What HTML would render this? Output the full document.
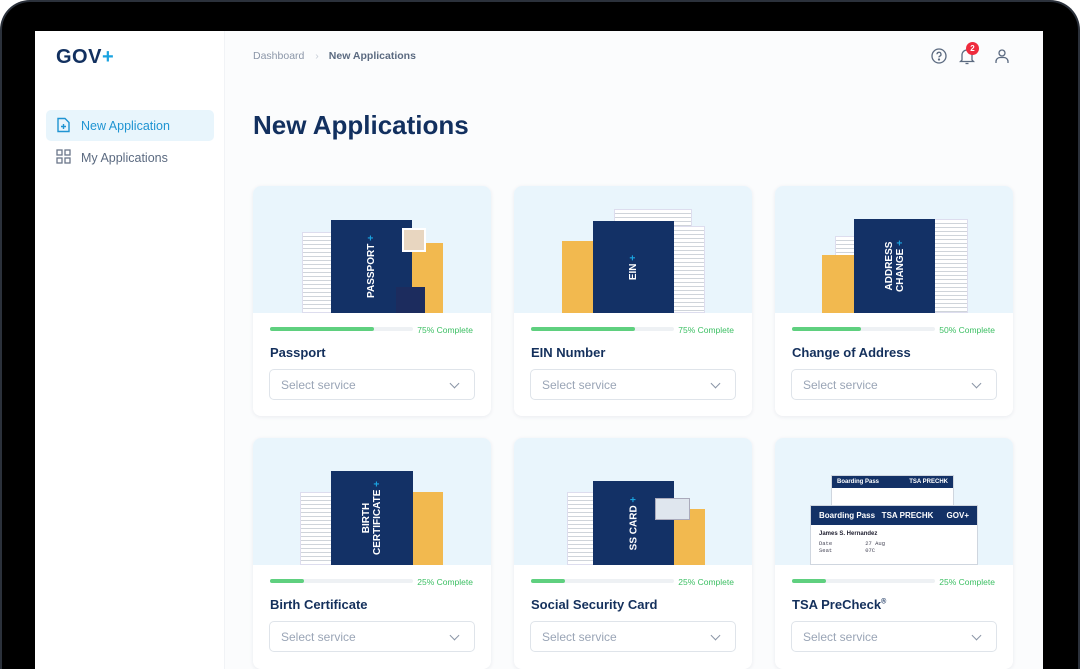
<!DOCTYPE html>
<html><head><meta charset="utf-8"><style>
*{box-sizing:border-box;margin:0;padding:0}
html,body{width:1080px;height:669px;overflow:hidden}
body{background:#fff;font-family:"Liberation Sans",sans-serif;position:relative}
.frame{position:absolute;left:0;top:0;width:1080px;height:669px;background:#000;border:2px solid #2b313b;border-bottom:none;border-radius:30px 30px 0 0}
.screen{position:absolute;left:35px;top:31px;width:1008px;height:638px;background:#fff;overflow:hidden}
.side{position:absolute;left:0;top:0;width:190px;height:100%;background:#fff;border-right:1px solid #f1f3f6}
.main{position:absolute;left:190px;top:0;right:0;height:100%;background:#fbfcfd}
.logo{position:absolute;left:21px;top:15px;font-weight:bold;font-size:20px;color:#12305f;letter-spacing:.5px}
.logo span{color:#1aa3e0}
.nav{position:absolute;left:11px;width:168px;height:31px;border-radius:5px;font-size:12.5px;display:flex;align-items:center;padding-left:35px}
.nav svg{position:absolute;left:10px;top:7px}
.crumb{position:absolute;left:28px;top:19px;font-size:10.5px;color:#8b96a8}
.crumb b{color:#5b6a80;font-weight:bold;margin-left:10px}
h1{position:absolute;left:28px;top:79px;font-size:26px;color:#12305f;font-weight:bold}
.card{position:absolute;width:238px;height:230px;background:#fff;border-radius:8px;box-shadow:0 1px 4px rgba(20,40,80,.08);overflow:hidden}
.img{position:absolute;left:0;top:0;width:100%;height:127px;background:#e9f5fc;overflow:hidden}
.bar{position:absolute;left:17px;top:141px;width:143px;height:4px;background:#eef1f4;border-radius:2px}
.bar i{display:block;height:4px;background:#5fd07f;border-radius:2px}
.pct{position:absolute;right:18px;top:139px;font-size:8.5px;color:#3cbf63}
.tt{position:absolute;left:17px;top:159px;font-size:13px;font-weight:bold;color:#14305c}
.sel{position:absolute;left:16px;top:183px;width:206px;height:31px;border:1px solid #dfe4ea;border-radius:5px;font-size:12px;color:#9aa5b6;padding:8px 0 0 11px}
.sel:after{content:"";position:absolute;right:16px;top:10px;width:6px;height:6px;border-right:1.3px solid #8a95a6;border-bottom:1.3px solid #8a95a6;transform:rotate(45deg)}
.a{position:absolute}
.w{background:#fff;border:1px solid #dde;background-image:repeating-linear-gradient(#fff 0 3px,#cfd4da 3px 4px)}
.y{background:#f2b94f}
.n{background:#133166;color:#fff;font-weight:bold;font-size:10px;display:flex;align-items:center;justify-content:center}
.n span{transform:rotate(-90deg);white-space:nowrap;text-align:center;line-height:11px}
.n em{color:#1aa3e0;font-style:normal}
.bp{position:absolute;background:#fff;border:1px solid #cfd6df}
.bp .h{background:#133166;color:#fff;font-size:7px;font-weight:bold;padding:4px 6px;display:flex;justify-content:space-between}
</style></head><body>
<div class="frame"></div>
<div class="screen">
 <div class="side">
  <div class="logo">GOV<span>+</span></div>
  <div class="nav" style="top:79px;background:#e8f5fc;color:#1f94d2">
   <svg width="15" height="16" viewBox="0 0 15 16" fill="none" stroke="#1f94d2" stroke-width="1.4"><path d="M2 1.5h7l4 4v9H2z"/><path d="M7.5 7v5M5 9.5h5"/></svg>New Application</div>
  <div class="nav" style="top:111px;color:#5b6a80">
   <svg width="15" height="15" viewBox="0 0 15 15" fill="none" stroke="#6b778a" stroke-width="1.3"><rect x="1" y="1" width="5" height="5"/><rect x="9" y="1" width="5" height="5"/><rect x="1" y="9" width="5" height="5"/><rect x="9" y="9" width="5" height="5"/></svg>My Applications</div>
 </div>
 <div class="main">
  <div class="crumb">Dashboard <span style="color:#c5ccd6;margin-left:8px">›</span><b>New Applications</b></div>
  <svg style="position:absolute;left:706px;top:17px" width="16" height="16" viewBox="0 0 16 16" fill="none" stroke="#5b6a80" stroke-width="1.3"><circle cx="8" cy="8" r="7"/><path d="M6 6.3a2 2 0 1 1 2.6 1.9c-.5.2-.6.6-.6 1.2"/><circle cx="8" cy="11.5" r=".5" fill="#5b6a80"/></svg>
  <svg style="position:absolute;left:734px;top:17px" width="16" height="17" viewBox="0 0 16 17" fill="none" stroke="#5b6a80" stroke-width="1.3"><path d="M3 12V7a5 5 0 0 1 10 0v5l1.5 1.5h-13z"/><path d="M6.5 15.5h3"/></svg>
  <div style="position:absolute;left:741px;top:11px;width:13px;height:13px;border-radius:50%;background:#ef2b3d;color:#fff;font-size:8px;font-weight:bold;text-align:center;line-height:13px">2</div>
  <svg style="position:absolute;left:769px;top:17px" width="16" height="16" viewBox="0 0 16 16" fill="none" stroke="#5b6a80" stroke-width="1.3"><circle cx="8" cy="5" r="3"/><path d="M2 15v-1.5A4 4 0 0 1 6 9.5h4a4 4 0 0 1 4 4V15"/></svg>
  <h1>New Applications</h1>
 </div>
</div>

<div class="card" style="left:253px;top:186px"><div class="img">
 <div class="a w" style="left:49px;top:46px;width:32px;height:81px;background-color:#f3d38a"></div>
 <div class="a n" style="left:78px;top:34px;width:81px;height:93px"><span>PASSPORT <em>+</em></span></div>
 <div class="a y" style="left:159px;top:57px;width:31px;height:70px"></div>
 <div class="a" style="left:149px;top:42px;width:24px;height:24px;background:#e8d6c0;border:2px solid #fff"></div>
 <div class="a" style="left:143px;top:101px;width:29px;height:26px;background:#1c2c5e"></div>
</div><div class="bar"><i style="width:104px"></i></div><div class="pct">75% Complete</div><div class="tt">Passport</div><div class="sel">Select service</div></div>

<div class="card" style="left:514px;top:186px"><div class="img">
 <div class="a w" style="left:100px;top:23px;width:78px;height:104px"></div>
 <div class="a w" style="left:158px;top:40px;width:33px;height:87px"></div>
 <div class="a y" style="left:48px;top:55px;width:33px;height:72px"></div>
 <div class="a n" style="left:79px;top:35px;width:81px;height:92px"><span>EIN <em>+</em></span></div>
</div><div class="bar"><i style="width:104px"></i></div><div class="pct">75% Complete</div><div class="tt">EIN Number</div><div class="sel">Select service</div></div>

<div class="card" style="left:775px;top:186px"><div class="img">
 <div class="a w" style="left:60px;top:50px;width:40px;height:77px"></div>
 <div class="a w" style="left:155px;top:33px;width:38px;height:94px"></div>
 <div class="a y" style="left:47px;top:69px;width:33px;height:58px"></div>
 <div class="a n" style="left:79px;top:33px;width:81px;height:94px"><span>ADDRESS<br>CHANGE <em>+</em></span></div>
</div><div class="bar"><i style="width:69px"></i></div><div class="pct">50% Complete</div><div class="tt">Change of Address</div><div class="sel">Select service</div></div>

<div class="card" style="left:253px;top:438px;height:231px"><div class="img">
 <div class="a w" style="left:47px;top:54px;width:34px;height:73px"></div>
 <div class="a n" style="left:78px;top:33px;width:82px;height:94px"><span>BIRTH<br>CERTIFICATE <em>+</em></span></div>
 <div class="a y" style="left:160px;top:54px;width:30px;height:73px"></div>
</div><div class="bar"><i style="width:34px"></i></div><div class="pct">25% Complete</div><div class="tt">Birth Certificate</div><div class="sel">Select service</div></div>

<div class="card" style="left:514px;top:438px;height:231px"><div class="img">
 <div class="a w" style="left:53px;top:54px;width:34px;height:73px"></div>
 <div class="a y" style="left:160px;top:71px;width:31px;height:56px"></div>
 <div class="a n" style="left:79px;top:43px;width:81px;height:84px"><span>SS CARD <em>+</em></span></div>
 <div class="a" style="left:141px;top:60px;width:35px;height:22px;background:#dfe6ee;border:1px solid #aab"></div>
</div><div class="bar"><i style="width:34px"></i></div><div class="pct">25% Complete</div><div class="tt">Social Security Card</div><div class="sel">Select service</div></div>

<div class="card" style="left:775px;top:438px;height:231px"><div class="img">
 <div class="bp" style="left:56px;top:37px;width:123px;height:40px"><div class="h" style="font-size:6px;padding:3px 5px"><span>Boarding Pass</span><span>TSA PRECHK</span></div></div>
 <div class="bp" style="left:35px;top:67px;width:168px;height:60px"><div class="h" style="padding:5px 8px;font-size:8px"><span>Boarding Pass &nbsp; TSA PRECHK</span><span>GOV+</span></div>
 <div style="font-size:6px;color:#223;padding:6px 8px 0;font-weight:bold">James S. Hernandez</div>
 <div style="font-size:5.5px;color:#445;padding:3px 8px 0;font-family:'Liberation Mono',monospace">Date &nbsp;&nbsp;&nbsp;&nbsp;&nbsp;&nbsp;&nbsp;&nbsp; 27 Aug<br>Seat &nbsp;&nbsp;&nbsp;&nbsp;&nbsp;&nbsp;&nbsp;&nbsp; 07C</div></div>
</div><div class="bar"><i style="width:34px"></i></div><div class="pct">25% Complete</div><div class="tt">TSA PreCheck<sup style="font-size:7px">®</sup></div><div class="sel">Select service</div></div>
</body></html>
